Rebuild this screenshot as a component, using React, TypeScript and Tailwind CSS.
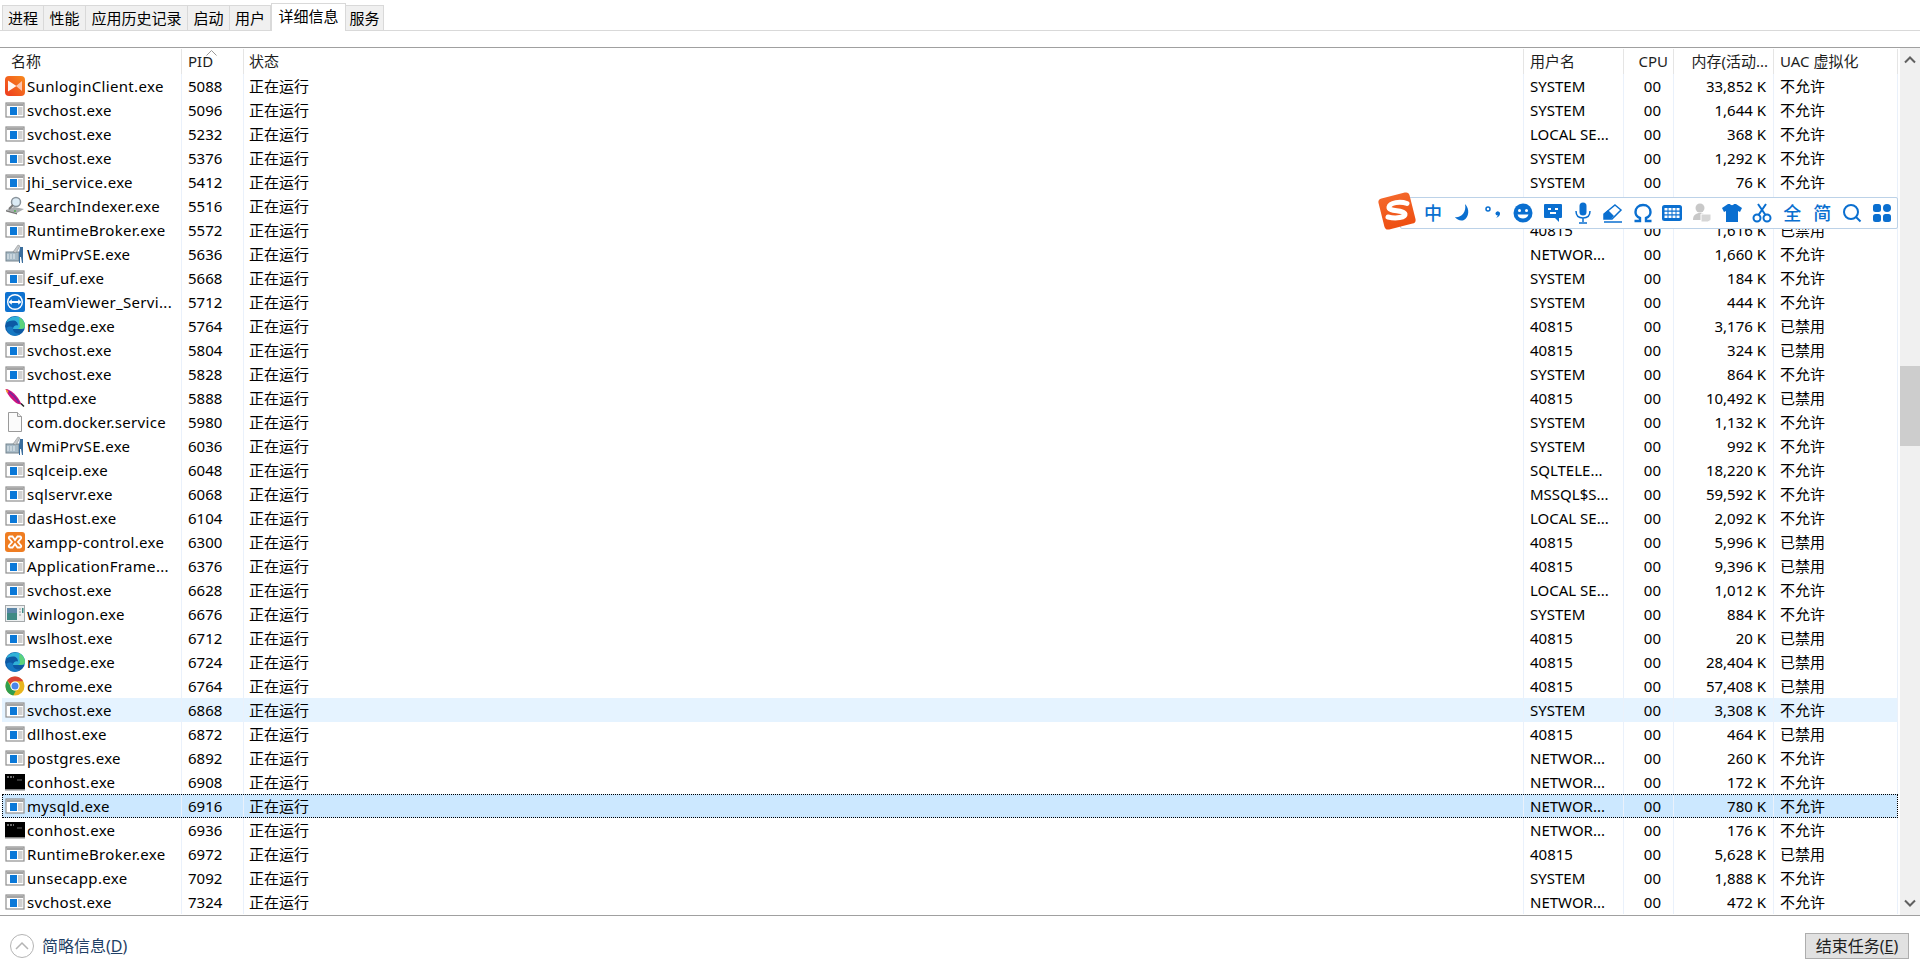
import React from "react";

type IconName =
  | "svc"
  | "sunlogin"
  | "search"
  | "wmi"
  | "teamviewer"
  | "edge"
  | "httpd"
  | "file"
  | "xampp"
  | "winlogon"
  | "chrome"
  | "console";

type Row = [IconName, string, string, string, string, string];

const ON = "不允许";
const OFF = "已禁用";

const rows: Row[] = [
  ["sunlogin", "SunloginClient.exe", "5088", "SYSTEM", "33,852 K", ON],
  ["svc", "svchost.exe", "5096", "SYSTEM", "1,644 K", ON],
  ["svc", "svchost.exe", "5232", "LOCAL SE...", "368 K", ON],
  ["svc", "svchost.exe", "5376", "SYSTEM", "1,292 K", ON],
  ["svc", "jhi_service.exe", "5412", "SYSTEM", "76 K", ON],
  // right-hand cells of this row sit behind the input method toolbar
  ["search", "SearchIndexer.exe", "5516", "", "", ""],
  ["svc", "RuntimeBroker.exe", "5572", "40815", "1,616 K", OFF],
  ["wmi", "WmiPrvSE.exe", "5636", "NETWOR...", "1,660 K", ON],
  ["svc", "esif_uf.exe", "5668", "SYSTEM", "184 K", ON],
  ["teamviewer", "TeamViewer_Servi...", "5712", "SYSTEM", "444 K", ON],
  ["edge", "msedge.exe", "5764", "40815", "3,176 K", OFF],
  ["svc", "svchost.exe", "5804", "40815", "324 K", OFF],
  ["svc", "svchost.exe", "5828", "SYSTEM", "864 K", ON],
  ["httpd", "httpd.exe", "5888", "40815", "10,492 K", OFF],
  ["file", "com.docker.service", "5980", "SYSTEM", "1,132 K", ON],
  ["wmi", "WmiPrvSE.exe", "6036", "SYSTEM", "992 K", ON],
  ["svc", "sqlceip.exe", "6048", "SQLTELE...", "18,220 K", ON],
  ["svc", "sqlservr.exe", "6068", "MSSQL$S...", "59,592 K", ON],
  ["svc", "dasHost.exe", "6104", "LOCAL SE...", "2,092 K", ON],
  ["xampp", "xampp-control.exe", "6300", "40815", "5,996 K", OFF],
  ["svc", "ApplicationFrame...", "6376", "40815", "9,396 K", OFF],
  ["svc", "svchost.exe", "6628", "LOCAL SE...", "1,012 K", ON],
  ["winlogon", "winlogon.exe", "6676", "SYSTEM", "884 K", ON],
  ["svc", "wslhost.exe", "6712", "40815", "20 K", OFF],
  ["edge", "msedge.exe", "6724", "40815", "28,404 K", OFF],
  ["chrome", "chrome.exe", "6764", "40815", "57,408 K", OFF],
  ["svc", "svchost.exe", "6868", "SYSTEM", "3,308 K", ON],
  ["svc", "dllhost.exe", "6872", "40815", "464 K", OFF],
  ["svc", "postgres.exe", "6892", "NETWOR...", "260 K", ON],
  ["console", "conhost.exe", "6908", "NETWOR...", "172 K", ON],
  ["svc", "mysqld.exe", "6916", "NETWOR...", "780 K", ON],
  ["console", "conhost.exe", "6936", "NETWOR...", "176 K", ON],
  ["svc", "RuntimeBroker.exe", "6972", "40815", "5,628 K", OFF],
  ["svc", "unsecapp.exe", "7092", "SYSTEM", "1,888 K", ON],
  ["svc", "svchost.exe", "7324", "NETWOR...", "472 K", ON],
];

const ProcIcon = ({ name }: { name: IconName }) => {
  switch (name) {
    case "svc":
      return (
        <svg width="20" height="20" viewBox="0 0 20 20">
          <rect x="1" y="3" width="18" height="14" fill="#fff" stroke="#8f8f8f" strokeWidth="1.200" />
          <rect x="1.500" y="3.500" width="17" height="2.500" fill="#a4a4a4" />
          <rect x="5" y="7" width="7" height="8" fill="#0a78d8" />
          <path d="M13 8h4.500M13 10h4.500M13 12h4.500M13 14h4.500" stroke="#a0a0a0" />
        </svg>
      );
    case "sunlogin":
      return (
        <svg width="20" height="20" viewBox="0 0 20 20">
          <defs>
            <linearGradient id="sl" x1="1" y1="0" x2="0" y2="1">
              <stop offset="0" stopColor="#f78a1e" />
              <stop offset="1" stopColor="#ee3a1e" />
            </linearGradient>
          </defs>
          <rect width="20" height="20" rx="4" fill="url(#sl)" />
          <path d="M3 4.500l8.500 5.500L3 15.500z" fill="#fff" opacity="0.95" />
          <path d="M17 5l-6 5 6 5z" fill="#fbc4ae" />
        </svg>
      );
    case "search":
      return (
        <svg width="20" height="20" viewBox="0 0 20 20">
          <path d="M1 14l8-3 10 2-7 4z" fill="#a9adb0" />
          <path d="M1 14l11 3v1.500L1 15.500z" fill="#777" />
          <circle cx="11" cy="6" r="4.500" fill="#dcebf5" stroke="#8a949c" strokeWidth="1.500" />
          <path d="M8 9l-4 4" stroke="#777" strokeWidth="2" />
          <circle cx="10" cy="15" r="1" fill="#4caf50" />
        </svg>
      );
    case "wmi":
      return (
        <svg width="20" height="20" viewBox="0 0 20 20">
          <rect x="1" y="8" width="13" height="9" fill="#a7bac6" stroke="#76858f" />
          <path d="M3 10v5M6 10v5M9 10v5" stroke="#eaf0f3" />
          <path d="M8 8l5-7 2 1-4 7z" fill="#c6c9cb" stroke="#7d8387" strokeWidth="0.500" />
          <path d="M15 3h3v16h-1l-1-6h-1v6h-1l0-10z" fill="#3a6d9c" />
        </svg>
      );
    case "teamviewer":
      return (
        <svg width="20" height="20" viewBox="0 0 20 20">
          <rect width="20" height="20" rx="2" fill="#0e72d0" />
          <circle cx="10" cy="10" r="8" fill="#fff" />
          <circle cx="10" cy="10" r="6.600" fill="#0e72d0" />
          <path d="M3.500 10l3.300-2.700v1.700h6.400V7.300l3.300 2.700-3.300 2.700V11H6.800v1.700z" fill="#fff" />
        </svg>
      );
    case "edge":
      return (
        <svg width="20" height="20" viewBox="0 0 20 20">
          <circle cx="10" cy="10" r="10" fill="#0c59a4" />
          <path d="M1 7C3 1 10-1 15 1.500c3 1.500 5 5 5 8.500 0 2-1.500 3-4 3H8c0-3 3-4.500 5-3.500 0-3-2-5-5-5-3 0-6 1-7 2.500z" fill="#2fb1d8" />
          <path d="M14 1c3 1.500 6 5 6 9 0 2-1.500 3-4 3h-3c2-1 2.500-3 1.500-5C14 5.500 15 3 14 1z" fill="#5bd27c" />
          <path d="M8 13c0 3 3 5 7 4.500-1.500 1.500-3 2.500-5 2.500C6 20 2 17 1.500 12 4 10 8 10 8 13z" fill="#1b86cf" opacity="0.7" />
        </svg>
      );
    case "httpd":
      return (
        <svg width="20" height="20" viewBox="0 0 20 20">
          <path d="M.5 1c4-.5 12 6 16 15-2 .5-4 0-6-1.500C6 11 2 6 .5 1z" fill="#cf127f" />
          <path d="M.5 1c1 .5 2 1 3 3L2 5z" fill="#f5a623" />
          <path d="M4 3.500c4 3 7 6.500 10 11" stroke="#6e2a9e" strokeWidth="1.500" fill="none" />
          <path d="M16 15.500l3 3" stroke="#222" strokeWidth="1.500" />
        </svg>
      );
    case "file":
      return (
        <svg width="20" height="20" viewBox="0 0 20 20">
          <path d="M3.500.500h9l4 4v15h-13z" fill="#fbfbfb" stroke="#9a9a9a" />
          <path d="M12.500.500v4h4" fill="#eee" stroke="#9a9a9a" />
        </svg>
      );
    case "xampp":
      return (
        <svg width="20" height="20" viewBox="0 0 20 20">
          <rect width="20" height="20" rx="3" fill="#ef7d22" />
          <path d="M5 4.500h2.500L10 8l2.500-3.500H15c1 0 1.500 1 1 2L13 10l3 3.500c.5 1 0 2-1 2h-2.500L10 12l-2.500 3.500H5c-1 0-1.500-1-1-2L7 10 4 6.500c-.5-1 0-2 1-2z" fill="none" stroke="#fff" strokeWidth="1.800" />
        </svg>
      );
    case "winlogon":
      return (
        <svg width="20" height="20" viewBox="0 0 20 20">
          <rect x="0.500" y="1.500" width="19" height="16" fill="#eceff0" stroke="#a5a9ab" />
          <rect x="2" y="4" width="10" height="12" fill="#3f8a84" />
          <rect x="2" y="4" width="10" height="5" fill="#5d87a8" />
          <path d="M14 5h2M14 8h2M14 11h2" stroke="#999" />
          <rect x="17" y="4" width="1.500" height="5" fill="#3f8a84" />
        </svg>
      );
    case "chrome":
      return (
        <svg width="20" height="20" viewBox="0 0 20 20">
          <circle cx="10" cy="10" r="9.500" fill="#e8b51e" />
          <path d="M10 .5a9.500 9.500 0 018.200 4.800H10a4.700 4.700 0 00-4.300 2.900L2.200 4.600A9.500 9.500 0 0110 .5z" fill="#d94336" />
          <path d="M2.200 4.600l4 6.900a4.700 4.700 0 004.700 3.100l-2.600 4.800A9.500 9.500 0 012.200 4.600z" fill="#2f9e4f" />
          <circle cx="10" cy="10" r="4.600" fill="#fff" />
          <circle cx="10" cy="10" r="3.500" fill="#4a86e8" />
        </svg>
      );
    case "console":
      return (
        <svg width="20" height="20" viewBox="0 0 20 20">
          <rect y="2" width="20" height="16" fill="#000" />
          <rect y="17" width="20" height="1.500" fill="#808080" />
          <path d="M2 5h2M5 5h2M8 5h1" stroke="#d8d8d8" />
          <path d="M12 8h5" stroke="#666" />
        </svg>
      );
  }
};

const Caret = ({ down }: { down?: boolean }) => (
  <svg width="12" height="8" viewBox="0 0 12 8">
    <path d={down ? "M1 1.500l5 5 5-5" : "M1 6.500l5-5 5 5"} fill="none" stroke="#606060" strokeWidth="2" />
  </svg>
);

const Toolbar = () => {
  const blue = "#0a6fd0";
  const cell = "flex w-[30px] h-full items-center justify-center";
  const glyph = "text-[18px] font-medium leading-none text-[#0a6fd0]";
  return (
    <div className="absolute left-[1376px] top-[192px] flex items-center">
      <div className="absolute left-[24px] top-[5px] flex h-[32px] w-[498px] items-center rounded-[2px] border border-[#bcd2e8] bg-white pl-[17px]">
        <div className={`${cell} ${glyph}`}>中</div>
        <div className={cell}>
          <svg width="20" height="20" viewBox="0 0 20 20"><path d="M12 1c5 5 4 13-1 16-3 1.500-7 0-9-3 5 1 12-4 10-13z" fill={blue} /></svg>
        </div>
        <div className={cell}>
          <svg width="22" height="20" viewBox="0 0 22 20"><circle cx="6" cy="6" r="2" fill="none" stroke={blue} strokeWidth="1.500" /><path d="M15 9c2 0 2 3-1 6 3-1 4-3 4-4.500S16 8 15 9z" fill={blue} /><circle cx="15.500" cy="10.500" r="2" fill={blue} /></svg>
        </div>
        <div className={cell}>
          <svg width="20" height="20" viewBox="0 0 20 20"><circle cx="10" cy="10" r="9.500" fill={blue} /><circle cx="6.500" cy="7.500" r="1.500" fill="#fff" /><circle cx="13.500" cy="7.500" r="1.500" fill="#fff" /><path d="M4.500 11.500c1 3 3 4 5.500 4s4.500-1 5.500-4z" fill="#fff" /></svg>
        </div>
        <div className={cell}>
          <svg width="20" height="20" viewBox="0 0 20 20"><path d="M2 1h16a1 1 0 011 1v12a1 1 0 01-1 1h-2v4l-4-4H2a1 1 0 01-1-1V2a1 1 0 011-1z" fill={blue} /><path d="M5 6h3M12 6h3M7 10h6" stroke="#fff" strokeWidth="2" /></svg>
        </div>
        <div className={cell}>
          <svg width="20" height="22" viewBox="0 0 20 22"><rect x="6.500" y="0.500" width="7" height="13" rx="3.500" fill={blue} /><path d="M3 9c0 5 3 7 7 7s7-2 7-7M10 16v4M6 21h8" fill="none" stroke={blue} strokeWidth="1.500" /></svg>
        </div>
        <div className={cell}>
          <svg width="20" height="20" viewBox="0 0 20 20"><path d="M12 2l6 5-9 9H1v-5z" fill="none" stroke={blue} strokeWidth="1.500" /><path d="M1 11l4-4 6 6-3 3H1z" fill={blue} /><path d="M1 19h18" stroke={blue} strokeWidth="1.500" /></svg>
        </div>
        <div className={cell}>
          <svg width="20" height="20" viewBox="0 0 20 20"><path d="M1.500 18h5.500v-3C4 14 2.500 11.500 2.500 9c0-4 3-7 7.500-7s7.500 3 7.500 7c0 2.500-1.500 5-4.500 6v3h5.500" fill="none" stroke={blue} strokeWidth="2.400" /></svg>
        </div>
        <div className={cell}>
          <svg width="20" height="16" viewBox="0 0 20 16">
            <rect width="20" height="16" rx="2.500" fill={blue} />
            <path d="M2.500 3h15v2.500h-15zM2.500 6.800h15v2.500h-15zM2.500 10.600h15v2.500h-15z" fill="#fff" />
            <path d="M6 2v12M10 2v12M14 2v12" stroke={blue} />
          </svg>
        </div>
        <div className={cell}>
          <svg width="20" height="20" viewBox="0 0 20 20"><circle cx="8" cy="5" r="4.500" fill="#c8c8c8" /><path d="M1 17c0-5 3-7 7-7s7 2 7 7z" fill="#c8c8c8" /><path d="M9 11h10v6l-3 2H9z" fill="#d6d6d6" stroke="#fff" /></svg>
        </div>
        <div className={cell}>
          <svg width="20" height="20" viewBox="0 0 20 20"><path d="M6 1h2c.5 1.500 3.500 1.500 4 0h2l6 4-2 4-2-1v11H4V8L2 9 0 5z" fill={blue} /></svg>
        </div>
        <div className={cell}>
          <svg width="20" height="20" viewBox="0 0 20 20"><circle cx="5" cy="15" r="3.500" fill="none" stroke={blue} strokeWidth="2" /><circle cx="15" cy="15" r="3.500" fill="none" stroke={blue} strokeWidth="2" /><path d="M6.500 12L14 1M13.500 12L6 1" stroke={blue} strokeWidth="2" /></svg>
        </div>
        <div className={`${cell} ${glyph}`}>全</div>
        <div className={`${cell} ${glyph}`}>简</div>
        <div className={cell}>
          <svg width="20" height="20" viewBox="0 0 20 20"><circle cx="9" cy="9" r="7" fill="none" stroke={blue} strokeWidth="2" /><path d="M14 14l4.500 4.500" stroke={blue} strokeWidth="2" /></svg>
        </div>
        <div className={cell}>
          <svg width="18" height="18" viewBox="0 0 18 18"><rect width="8" height="8" rx="2.500" fill={blue} /><rect x="10" width="8" height="8" rx="4" fill={blue} /><rect y="10" width="8" height="8" rx="2.500" fill={blue} /><rect x="10" y="10" width="8" height="8" rx="2.500" fill={blue} /></svg>
        </div>
      </div>
      <svg className="relative" width="42" height="38" viewBox="0 0 42 38">
        <defs>
          <linearGradient id="sg" x1="0" y1="0" x2="0" y2="1">
            <stop offset="0" stopColor="#f4672a" />
            <stop offset="1" stopColor="#ee4f12" />
          </linearGradient>
        </defs>
        <rect x="5" y="3" width="32" height="32" rx="4" fill="url(#sg)" transform="rotate(-14 21 19)" />
        <path d="M31 11.500c-7-2.500-17-1-18 3.500-1 5 15 2.500 16 7 .5 3.500-9 5-17 3" fill="none" stroke="#fff" strokeWidth="5" strokeLinecap="round" />
      </svg>
    </div>
  );
};

const App = () => {
  const tabs = ["进程", "性能", "应用历史记录", "启动", "用户", "详细信息", "服务"];
  const tabWidths = ["w-[42px]", "w-[42px]", "w-[102px]", "w-[42px]", "w-[41px]", "w-[75px]", "w-[38px]"];

  return (
    <div className="relative flex h-[976px] w-[1920px] flex-col overflow-hidden bg-white [font-family:'Noto_Sans','Noto_Sans_CJK_SC',sans-serif] text-[15px] text-black">
      {/* tabs */}
      <div className="flex h-[31px] items-end border-b border-[#d9d9d9] pl-[2px]">
        {tabs.map((t, i) =>
          i === 5 ? (
            <div key={t} className={`${tabWidths[i]} relative -mb-px flex h-[28px] items-center justify-center border-x border-t border-[#d9d9d9] bg-white pb-[3px]`}>
              {t}
            </div>
          ) : (
            <div key={t} className={`${tabWidths[i]} flex h-[25px] items-center justify-center border-t border-r border-[#d9d9d9] bg-[#f0f0f0] first:border-l`}>
              {t}
            </div>
          )
        )}
      </div>

      <div className="h-[16px] shrink-0" />

      {/* table */}
      <div className="flex h-[869px] shrink-0 border-y border-y-[#a0a0a0] leading-[24px]">
        <div className="w-[1900px] shrink-0 pl-[2px] pr-[2px]">
          <div className="flex h-[26px] pt-px text-[#1e1e1e]">
            <div className="w-[180px] border-r border-[#e5e5e5] pl-[9px]">名称</div>
            <div className="relative w-[62px] border-r border-[#e5e5e5] pl-[6px]">
              PID
              <svg className="absolute left-[24px] top-[1px]" width="11" height="6" viewBox="0 0 11 6">
                <path d="M.5 5.500l5-5 5 5" fill="none" stroke="#9a9a9a" />
              </svg>
            </div>
            <div className="w-[1280px] border-r border-[#e5e5e5] pl-[5px]">状态</div>
            <div className="w-[100px] border-r border-[#e5e5e5] pl-[6px]">用户名</div>
            <div className="w-[50px] border-r border-[#e5e5e5] pr-[5px] text-right">CPU</div>
            <div className="w-[100px] border-r border-[#e5e5e5] pr-[5px] text-right">内存(活动...</div>
            <div className="w-[124px] border-r border-[#e5e5e5] pl-[6px]">UAC 虚拟化</div>
          </div>
          {rows.map(([icon, name, pid, user, mem, uac], i) => (
            <div
              key={pid}
              className={`flex h-[24px] ${i === 26 ? "bg-[#e5f3ff]" : ""} ${i === 30 ? "bg-[#cce8ff] outline-1 -outline-offset-1 outline-dotted outline-black" : ""}`}
            >
              <div className="flex w-[180px] items-center border-r border-[#eaf1fb] pl-[3px]">
                <span className="mr-[2px] flex h-[20px] w-[20px] shrink-0">
                  <ProcIcon name={icon} />
                </span>
                <span className="tracking-[0.33px]">{name}</span>
              </div>
              <div className="w-[62px] border-r border-[#eaf1fb] pl-[6px]">{pid}</div>
              <div className="w-[1280px] border-r border-[#eaf1fb] pl-[5px]">正在运行</div>
              <div className="w-[100px] border-r border-[#eaf1fb] pl-[6px]">{user}</div>
              <div className="w-[50px] border-r border-[#eaf1fb] pr-[12px] text-right">{user && "00"}</div>
              <div className="w-[100px] border-r border-[#eaf1fb] pr-[7px] text-right">{mem}</div>
              <div className="w-[124px] border-r border-[#eaf1fb] pl-[6px]">{uac}</div>
            </div>
          ))}
        </div>
        {/* scrollbar */}
        <div className="flex w-[20px] shrink-0 flex-col bg-[#f0f0f0]">
          <div className="flex h-[24px] shrink-0 items-center justify-center">
            <Caret />
          </div>
          <div className="h-[294px] shrink-0" />
          <div className="h-[80px] shrink-0 bg-[#cdcdcd]" />
          <div className="flex-1" />
          <div className="flex h-[24px] shrink-0 items-center justify-center">
            <Caret down />
          </div>
        </div>
      </div>

      {/* footer */}
      <div className="flex flex-1 items-center justify-between pl-[10px] pr-[11px] text-[16px]">
        <div className="flex items-center gap-[8px] text-[#1f3f66]">
          <svg width="24" height="24" viewBox="0 0 24 24">
            <circle cx="12" cy="12" r="11.500" fill="none" stroke="#b4b4b4" />
            <path d="M6 15l6-6 6 6" fill="none" stroke="#b4b4b4" strokeWidth="1.500" />
          </svg>
          <span>
            简略信息(<span className="underline">D</span>)
          </span>
        </div>
        <button className="flex h-[26px] w-[104px] items-center justify-center border border-[#adadad] bg-[#e1e1e1] text-[#1e1e1e]">
          结束任务(<span className="underline">E</span>)
        </button>
      </div>

      <Toolbar />
    </div>
  );
};

export default App;
